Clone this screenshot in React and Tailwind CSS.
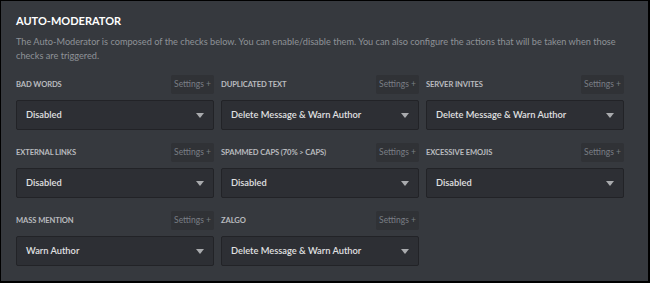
import React from "react";

const rows = [
  [
    { label: "BAD WORDS", value: "Disabled" },
    { label: "DUPLICATED TEXT", value: "Delete Message & Warn Author" },
    { label: "SERVER INVITES", value: "Delete Message & Warn Author" },
  ],
  [
    { label: "EXTERNAL LINKS", value: "Disabled" },
    { label: "SPAMMED CAPS (70% > CAPS)", value: "Disabled" },
    { label: "EXCESSIVE EMOJIS", value: "Disabled" },
  ],
  [
    { label: "MASS MENTION", value: "Warn Author" },
    { label: "ZALGO", value: "Delete Message & Warn Author" },
  ],
];

function Check({ label, value }) {
  return (
    <div className="flex flex-col gap-[6px]">
      <div className="flex items-center justify-between h-[19px]">
        <span className="text-[7.6px] font-bold text-[#b9bbbe] tracking-[-0.1px]">{label}</span>
        <button className="h-[19px] w-[43px] rounded-[2px] bg-[#303236] text-[8.5px] text-[#7a7e85] flex items-center justify-center">
          Settings +
        </button>
      </div>
      <div className="h-[30px] rounded-[2px] border border-[#222327] bg-[#2d2f34] flex items-center justify-between pl-[9px] pr-[9px]">
        <span className="text-[9.3px] font-semibold text-[#e0e1e2]">{value}</span>
        <svg width="8" height="5" viewBox="0 0 8 5">
          <path d="M0 0 H8 L4 5 Z" fill="#a9abae" />
        </svg>
      </div>
    </div>
  );
}

export default function App() {
  return (
    <div
      className="w-[650px] h-[283px] bg-black border-t border-l border-r-2 border-b-2 border-black"
      style={{ fontFamily: "Lato, 'Noto Sans', sans-serif" }}
    >
      <div className="w-full h-full bg-[#36393e] pl-[15px] pt-[12px]">
        <h1 className="text-[11px] leading-[16px] font-bold text-white">AUTO-MODERATOR</h1>
        <p className="mt-[6px] w-[620px] text-[9.2px] leading-[14px] text-[#8e9297]">
          The Auto-Moderator is composed of the checks below. You can enable/disable them. You can also configure the actions that will be taken when those checks are triggered.
        </p>
        <div className="mt-[12px] grid grid-cols-[198px_198px_198px] gap-x-[7px] gap-y-[13px]">
          {rows.flat().map((c) => (
            <Check key={c.label} {...c} />
          ))}
        </div>
      </div>
    </div>
  );
}
